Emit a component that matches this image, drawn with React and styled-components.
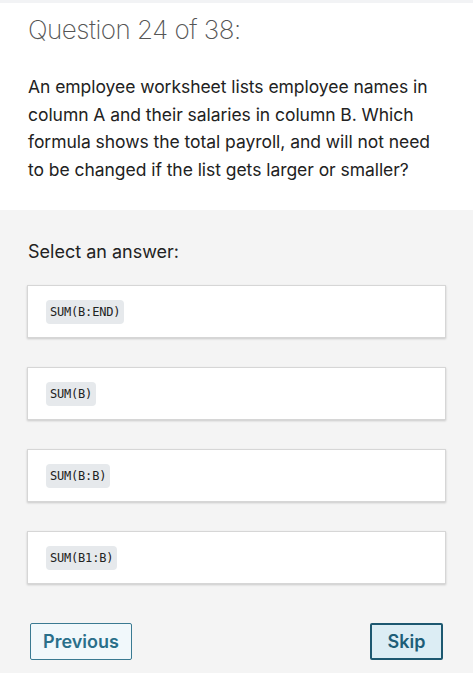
import React from "react";
import styled, { createGlobalStyle } from "styled-components";

const Global = createGlobalStyle`
  html, body { margin: 0; padding: 0; background: #f4f4f4; }
  body { font-family: Inter, "Noto Sans", Arial, sans-serif; -webkit-font-smoothing: antialiased; }
`;

const Page = styled.div`
  width: 473px;
  min-height: 673px;
  background: #f4f4f4;
  display: flex;
  flex-direction: column;
`;

const Header = styled.section`
  background: #fff;
  border-top: 3px solid #f2f3f5;
  padding: 12px 28px 28px 28px;
  height: 210px;
  box-sizing: border-box;
`;

const Title = styled.h1`
  margin: 0;
  font-weight: 200;
  font-size: 26px;
  line-height: 30px;
  color: #555;
  letter-spacing: -0.5px;
`;

const Prompt = styled.p`
  margin: 28px 0 0 0;
  font-size: 17.5px;
  line-height: 27.7px;
  color: #222;
  letter-spacing: -0.05px;
`;

const Body = styled.section`
  padding: 28px 27px 0 27px;
  display: flex;
  flex-direction: column;
`;

const Label = styled.div`
  font-size: 18px;
  line-height: 28px;
  color: #222;
  margin-left: 1px;
`;

const Options = styled.div`
  margin-top: 19px;
  display: flex;
  flex-direction: column;
  gap: 29px;
`;

const Card = styled.div`
  height: 53px;
  box-sizing: border-box;
  background: #fff;
  border: 1px solid #d6d6d6;
  box-shadow: 0 1px 2px rgba(0,0,0,0.18);
  display: flex;
  align-items: center;
  padding-left: 18px;
`;

const Code = styled.code`
  font-family: "DejaVu Sans Mono", "Liberation Mono", monospace;
  font-size: 12px;
  color: #222;
  background: #e6e9ec;
  border-radius: 4px;
  padding: 5px 4px;
  line-height: 14px;
  letter-spacing: -0.2px;
`;

const Nav = styled.div`
  margin-top: 39px;
  display: flex;
  justify-content: space-between;
  padding: 0 3px 0 3px;
`;

const Button = styled.button`
  height: 37px;
  box-sizing: border-box;
  font-family: Inter, Arial, sans-serif;
  font-weight: 600;
  font-size: 18px;
  color: ${p => (p.$primary ? "#1d5e78" : "#2a6f8a")};
  background: ${p => (p.$primary ? "#dcedf4" : "#f1f8fb")};
  border: ${p => (p.$primary ? "2.5px solid #1d5870" : "1.5px solid #3a7a92")};
  border-radius: 2px;
  padding: 0;
  width: ${p => p.$w}px;
`;

const options = ["SUM(B:END)", "SUM(B)", "SUM(B:B)", "SUM(B1:B)"];

export default function App() {
  return (
    <Page>
      <Global />
      <Header>
        <Title>Question 24 of 38:</Title>
        <Prompt>
          An employee worksheet lists employee names in column A and their
          salaries in column B. Which formula shows the total payroll, and will
          not need to be changed if the list gets larger or smaller?
        </Prompt>
      </Header>
      <Body>
        <Label>Select an answer:</Label>
        <Options>
          {options.map(o => (
            <Card key={o}>
              <Code>{o}</Code>
            </Card>
          ))}
        </Options>
        <Nav>
          <Button $w={102}>Previous</Button>
          <Button $primary $w={73}>Skip</Button>
        </Nav>
      </Body>
    </Page>
  );
}
